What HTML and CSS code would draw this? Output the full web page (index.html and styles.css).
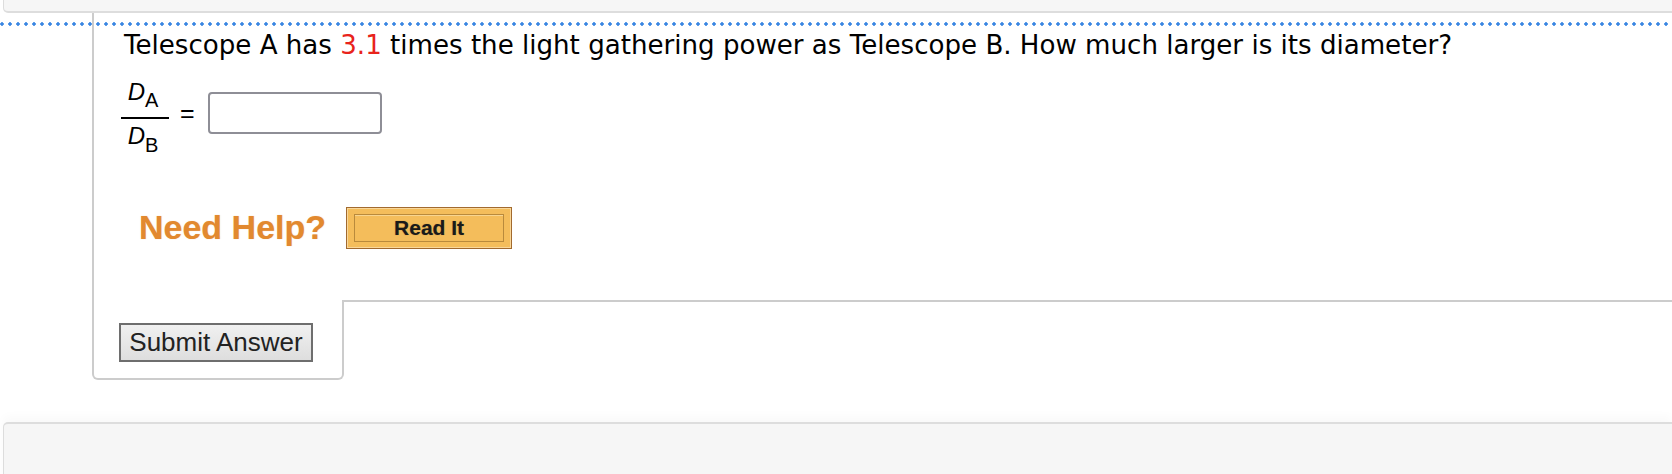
FILE: index.html
```html
<!DOCTYPE html>
<html>
<head>
<meta charset="utf-8">
<link rel="stylesheet" href="styles.css">
</head>
<body>
<div class="topbar"></div>
<div class="question">
  <div class="dots"></div>
  <p class="qtext">Telescope A has <span class="red">3.1</span> times the light gathering power as Telescope B. How much larger is its diameter?</p>
  <div class="eqrow">
    <span class="frac">
      <span class="num"><i>D</i><sub>A</sub></span>
      <span class="den"><i>D</i><sub>B</sub></span>
    </span>
    <span class="eq">=</span>
    <span class="answer"></span>
  </div>
  <div class="help">
    <span class="needhelp">Need Help?</span>
    <span class="readit"><span class="readit-in">Read It</span></span>
  </div>
</div>
<div class="bottomrow">
  <div class="submitcell"><span class="submit">Submit Answer</span></div>
  <div class="rest"></div>
</div>
<div class="nextbox"></div>
</body>
</html>
```

FILE: styles.css
```css
html, body { margin: 0; padding: 0; background: #fff; }
body { font-family: "DejaVu Sans", Verdana, sans-serif; color: #000; overflow: hidden; height: 474px; }

.topbar {
  margin-left: 3px;
  height: 11px;
  background: #f6f6f6;
  border-left: 1px solid #dddddd;
  border-bottom: 2px solid #dddddd;
  border-bottom-left-radius: 5px;
}

.question {
  position: relative;
  margin-left: 92px;
  border-left: 2px solid #cccccc;
  height: 287px;
  padding-left: 30px;
  box-sizing: border-box;
  padding-top: 17px;
}
.dots {
  position: absolute;
  top: 9px;
  left: -94px;
  width: 1672px;
  height: 4px;
  background-image: radial-gradient(circle at 2px 2px, #3a86e2 1.5px, transparent 1.9px);
  background-size: 8px 4px;
}

.qtext {
  margin: 0;
  font-size: 26.1px;
  line-height: 30px;
}
.red { color: #e8231b; }

.eqrow {
  display: flex;
  align-items: flex-start;
  margin-top: 21px;
  height: 76px;
}
.frac {
  display: inline-flex;
  flex-direction: column;
  align-items: center;
  font-family: "Liberation Sans", Arial, sans-serif;
  width: 48px;
  margin-left: -3px;
}
.frac i { font-size: 24px; font-style: italic; }
.frac sub { font-size: 20px; line-height: 0; }
.num sub { vertical-align: -7px; }
.den sub { vertical-align: -8px; }
.num {
  display: block;
  width: 48px;
  text-align: center;
  border-bottom: 2px solid #000;
  line-height: 22px;
  height: 38px;
  padding-right: 4px;
  box-sizing: border-box;
}
.den {
  display: block;
  line-height: 28px;
  height: 38px;
  padding-top: 3px;
  padding-right: 4px;
  box-sizing: border-box;
}
.eq {
  font-family: "Liberation Sans", Arial, sans-serif;
  font-size: 25px;
  line-height: 24px;
  margin-left: 11px;
  margin-right: 13px;
  margin-top: 20px;
}
.answer {
  display: block;
  width: 174px;
  height: 42px;
  box-sizing: border-box;
  border: 2px solid #8e8e96;
  border-radius: 4px;
  background: #fff;
  margin-top: 11px;
}

.help {
  display: flex;
  align-items: center;
  margin-top: 50px;
  margin-left: 15px;
  height: 42px;
}
.needhelp {
  font-family: "Liberation Sans", Arial, sans-serif;
  font-weight: bold;
  font-size: 34px;
  color: #e2892f;
  text-shadow: 0 0 1px rgba(226,137,47,0.5);
  margin-right: 20px;
  margin-top: -2px;
}
.readit {
  display: flex;
  width: 166px;
  height: 42px;
  box-sizing: border-box;
  border: 1px solid #a26a2e;
  box-shadow: inset 0 0 0 1px #f9d79a;
  background: #f4bd5b;
  padding: 6px 7px;
}
.readit-in {
  flex: 1;
  display: flex;
  align-items: center;
  justify-content: center;
  border: 1px solid #b98a3c;
  box-shadow: inset 0 1px 0 #f8d590;
  font-family: "Liberation Sans", Arial, sans-serif;
  font-weight: bold;
  font-size: 21px;
  color: #1a1a1a;
  text-shadow: 0 0 1px rgba(0,0,0,0.35);
}

.bottomrow {
  display: flex;
  height: 80px;
}
.submitcell {
  margin-left: 92px;
  width: 252px;
  box-sizing: border-box;
  border: 2px solid #cccccc;
  border-top: none;
  border-radius: 0 0 6px 6px;
  padding-left: 25px;
  padding-top: 23px;
}
.submit {
  display: flex;
  align-items: center;
  justify-content: center;
  width: 194px;
  height: 39px;
  box-sizing: border-box;
  border: 2px solid #6e6e6e;
  background: linear-gradient(#f0f0f0, #dedede);
  font-family: "Liberation Sans", Arial, sans-serif;
  font-size: 26px;
  color: #222;
}
.rest {
  flex: 1;
  margin-left: -2px;
  border-top: 2px solid #cccccc;
  height: 0;
}

.nextbox {
  margin-top: 42px;
  margin-left: 3px;
  height: 60px;
  background: #f6f6f6;
  border-left: 1px solid #dddddd;
  border-top: 2px solid #dddddd;
  border-top-left-radius: 5px;
  box-shadow: 0 -6px 10px rgba(0,0,0,0.025);
}
```
